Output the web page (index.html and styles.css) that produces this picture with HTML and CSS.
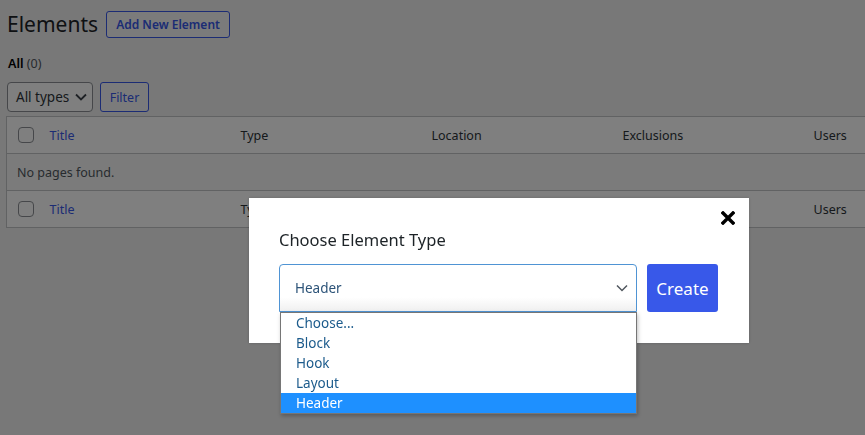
FILE: index.html
```html
<!DOCTYPE html>
<html>
<head>
<meta charset="utf-8">
<link rel="stylesheet" href="styles.css">
</head>
<body>
<div class="wrap">
  <div class="title-row">
    <h1 class="page-title">Elements</h1>
    <a class="btn-outline add-new">Add New Element</a>
  </div>
  <div class="subsubsub"><span class="current">All</span> <span class="count">(0)</span></div>
  <div class="tablenav">
    <div class="fake-select">All types
      <svg class="chev" width="12" height="8" viewBox="0 0 12 8"><path d="M1 1.5 L6 6.5 L11 1.5" fill="none" stroke="#3c434a" stroke-width="1.8"/></svg>
    </div>
    <a class="btn-outline filter">Filter</a>
  </div>
  <table class="list-table">
    <colgroup>
      <col class="c-cb"><col class="c-col"><col class="c-col"><col class="c-col"><col class="c-col"><col class="c-last">
    </colgroup>
    <thead>
      <tr>
        <th class="cb"><span class="checkbox"></span></th>
        <th class="link">Title</th>
        <th>Type</th>
        <th>Location</th>
        <th>Exclusions</th>
        <th>Users</th>
      </tr>
    </thead>
    <tbody>
      <tr><td colspan="6" class="empty">No pages found.</td></tr>
    </tbody>
    <tfoot>
      <tr>
        <th class="cb"><span class="checkbox"></span></th>
        <th class="link">Title</th>
        <th>Type</th>
        <th>Location</th>
        <th>Exclusions</th>
        <th>Users</th>
      </tr>
    </tfoot>
  </table>
</div>

<div class="overlay"></div>

<div class="modal">
  <svg class="close" width="14" height="14" viewBox="0 0 14 14"><path d="M2 2 L12 12 M12 2 L2 12" stroke="#000" stroke-width="3.4" stroke-linecap="square"/></svg>
  <h2 class="modal-title">Choose Element Type</h2>
  <div class="modal-row">
    <div class="type-select">
      <span>Header</span>
      <svg class="chev2" width="12" height="8" viewBox="0 0 12 8"><path d="M1 1.5 L6 6.5 L11 1.5" fill="none" stroke="#50575e" stroke-width="1.5"/></svg>
    </div>
    <a class="btn-primary">Create</a>
  </div>
  <ul class="dropdown">
    <li>Choose...</li>
    <li>Block</li>
    <li>Hook</li>
    <li>Layout</li>
    <li class="selected">Header</li>
  </ul>
</div>
</body>
</html>
```

FILE: styles.css
```css
html, body {
  margin: 0;
  padding: 0;
  background: #f0f0f1;
  overflow: hidden;
  width: 865px;
  height: 435px;
  font-family: "Noto Sans", "Open Sans", sans-serif;
  color: #3c434a;
  font-size: 13px;
}

.wrap {
  padding: 0 0 0 6px;
  width: 900px;
}

.title-row {
  display: flex;
  align-items: center;
  gap: 8px;
  padding-top: 11px;
  height: 27px;
}

.page-title {
  margin: 0 0 0 1px;
  font-size: 21px;
  font-weight: 400;
  color: #1d2327;
  line-height: 27px;
}

.btn-outline {
  display: inline-flex;
  align-items: center;
  border: 1px solid #3858e9;
  border-radius: 3px;
  color: #3858e9;
  background: #f6f7f7;
  font-size: 12px;
  padding: 0 9px;
  box-sizing: border-box;
}

.add-new {
  height: 27px;
  font-weight: 600;
  width: 124px;
  justify-content: center;
  padding: 0;
}

.subsubsub {
  margin: 17px 0 0 2px;
  font-size: 12.5px;
  line-height: 18px;
  color: #50575e;
}
.subsubsub .current {
  color: #000;
  font-weight: 600;
}
.subsubsub .count {
  color: #50575e;
}

.tablenav {
  display: flex;
  gap: 7px;
  margin-top: 9px;
  margin-left: 1px;
  height: 30px;
}

.fake-select {
  box-sizing: border-box;
  width: 86px;
  height: 30px;
  border: 1px solid #8c8f94;
  border-radius: 4px;
  background: #fff;
  color: #2c3338;
  font-size: 13.5px;
  display: flex;
  align-items: center;
  padding-left: 8px;
  gap: 6px;
}

.filter {
  height: 30px;
  width: 49px;
  justify-content: center;
  padding: 0;
  font-size: 12.5px;
}

.list-table {
  margin-top: 4px;
  border-collapse: collapse;
  table-layout: fixed;
  width: 900px;
  background: #fff;
  border: 1px solid #c3c4c7;
}

.c-cb { width: 33px; }
.c-col { width: 191px; }

.list-table th, .list-table td {
  text-align: left;
  font-weight: 400;
  font-size: 12.5px;
  height: 37px;
  padding: 0 10px;
  color: #2c3338;
  box-sizing: border-box;
}

.list-table thead th {
  border-bottom: 1px solid #c3c4c7;
}
.list-table tfoot th {
  border-top: 1px solid #c3c4c7;
}

.list-table th.link { color: #3858e9; }

.list-table th.cb {
  padding: 0 0 0 11px;
}

.checkbox {
  display: block;
  width: 16px;
  height: 16px;
  box-sizing: border-box;
  border: 1px solid #8c8f94;
  border-radius: 4px;
  background: #fff;
}

.list-table td.empty {
  color: #50575e;
  background: #f6f7f7;
}

.overlay {
  position: fixed;
  inset: 0;
  background: rgba(0, 0, 0, 0.5);
}

.modal {
  position: fixed;
  left: 249px;
  top: 198px;
  width: 500px;
  height: 145px;
  box-sizing: border-box;
  background: #fff;
  padding: 30px 31px 31px 30px;
  box-shadow: 0 0 3px rgba(0,0,0,0.2);
}

.close {
  position: absolute;
  right: 14px;
  top: 13px;
}

.modal-title {
  margin: 0;
  font-size: 16.5px;
  font-weight: 400;
  color: #1d2327;
  line-height: 24px;
}

.modal-row {
  display: flex;
  gap: 10px;
  margin-top: 12px;
}

.type-select {
  box-sizing: border-box;
  width: 358px;
  height: 48px;
  border: 1px solid #4f94d4;
  border-radius: 4px 4px 0 0;
  background: linear-gradient(#fff 70%, #f0f0f0);
  display: flex;
  align-items: center;
  justify-content: space-between;
  padding: 0 8px 0 15px;
  font-size: 13.5px;
  color: #2c5378;
}

.btn-primary {
  width: 71px;
  height: 48px;
  background: #3858e9;
  border-radius: 3px;
  color: #fff;
  font-size: 17px;
  display: flex;
  align-items: center;
  justify-content: center;
}

.dropdown {
  position: absolute;
  left: 31px;
  top: 114px;
  width: 357px;
  margin: 0;
  padding: 0;
  list-style: none;
  background: #fff;
  border: 1px solid #767676;
  box-sizing: border-box;
  box-shadow: 1px 2px 4px rgba(0,0,0,0.25);
}

.dropdown li {
  height: 20px;
  line-height: 20px;
  padding-left: 15px;
  font-size: 13.5px;
  color: #1c5b8c;
}

.dropdown li.selected {
  background: #1e90ff;
  color: #fff;
}
```
